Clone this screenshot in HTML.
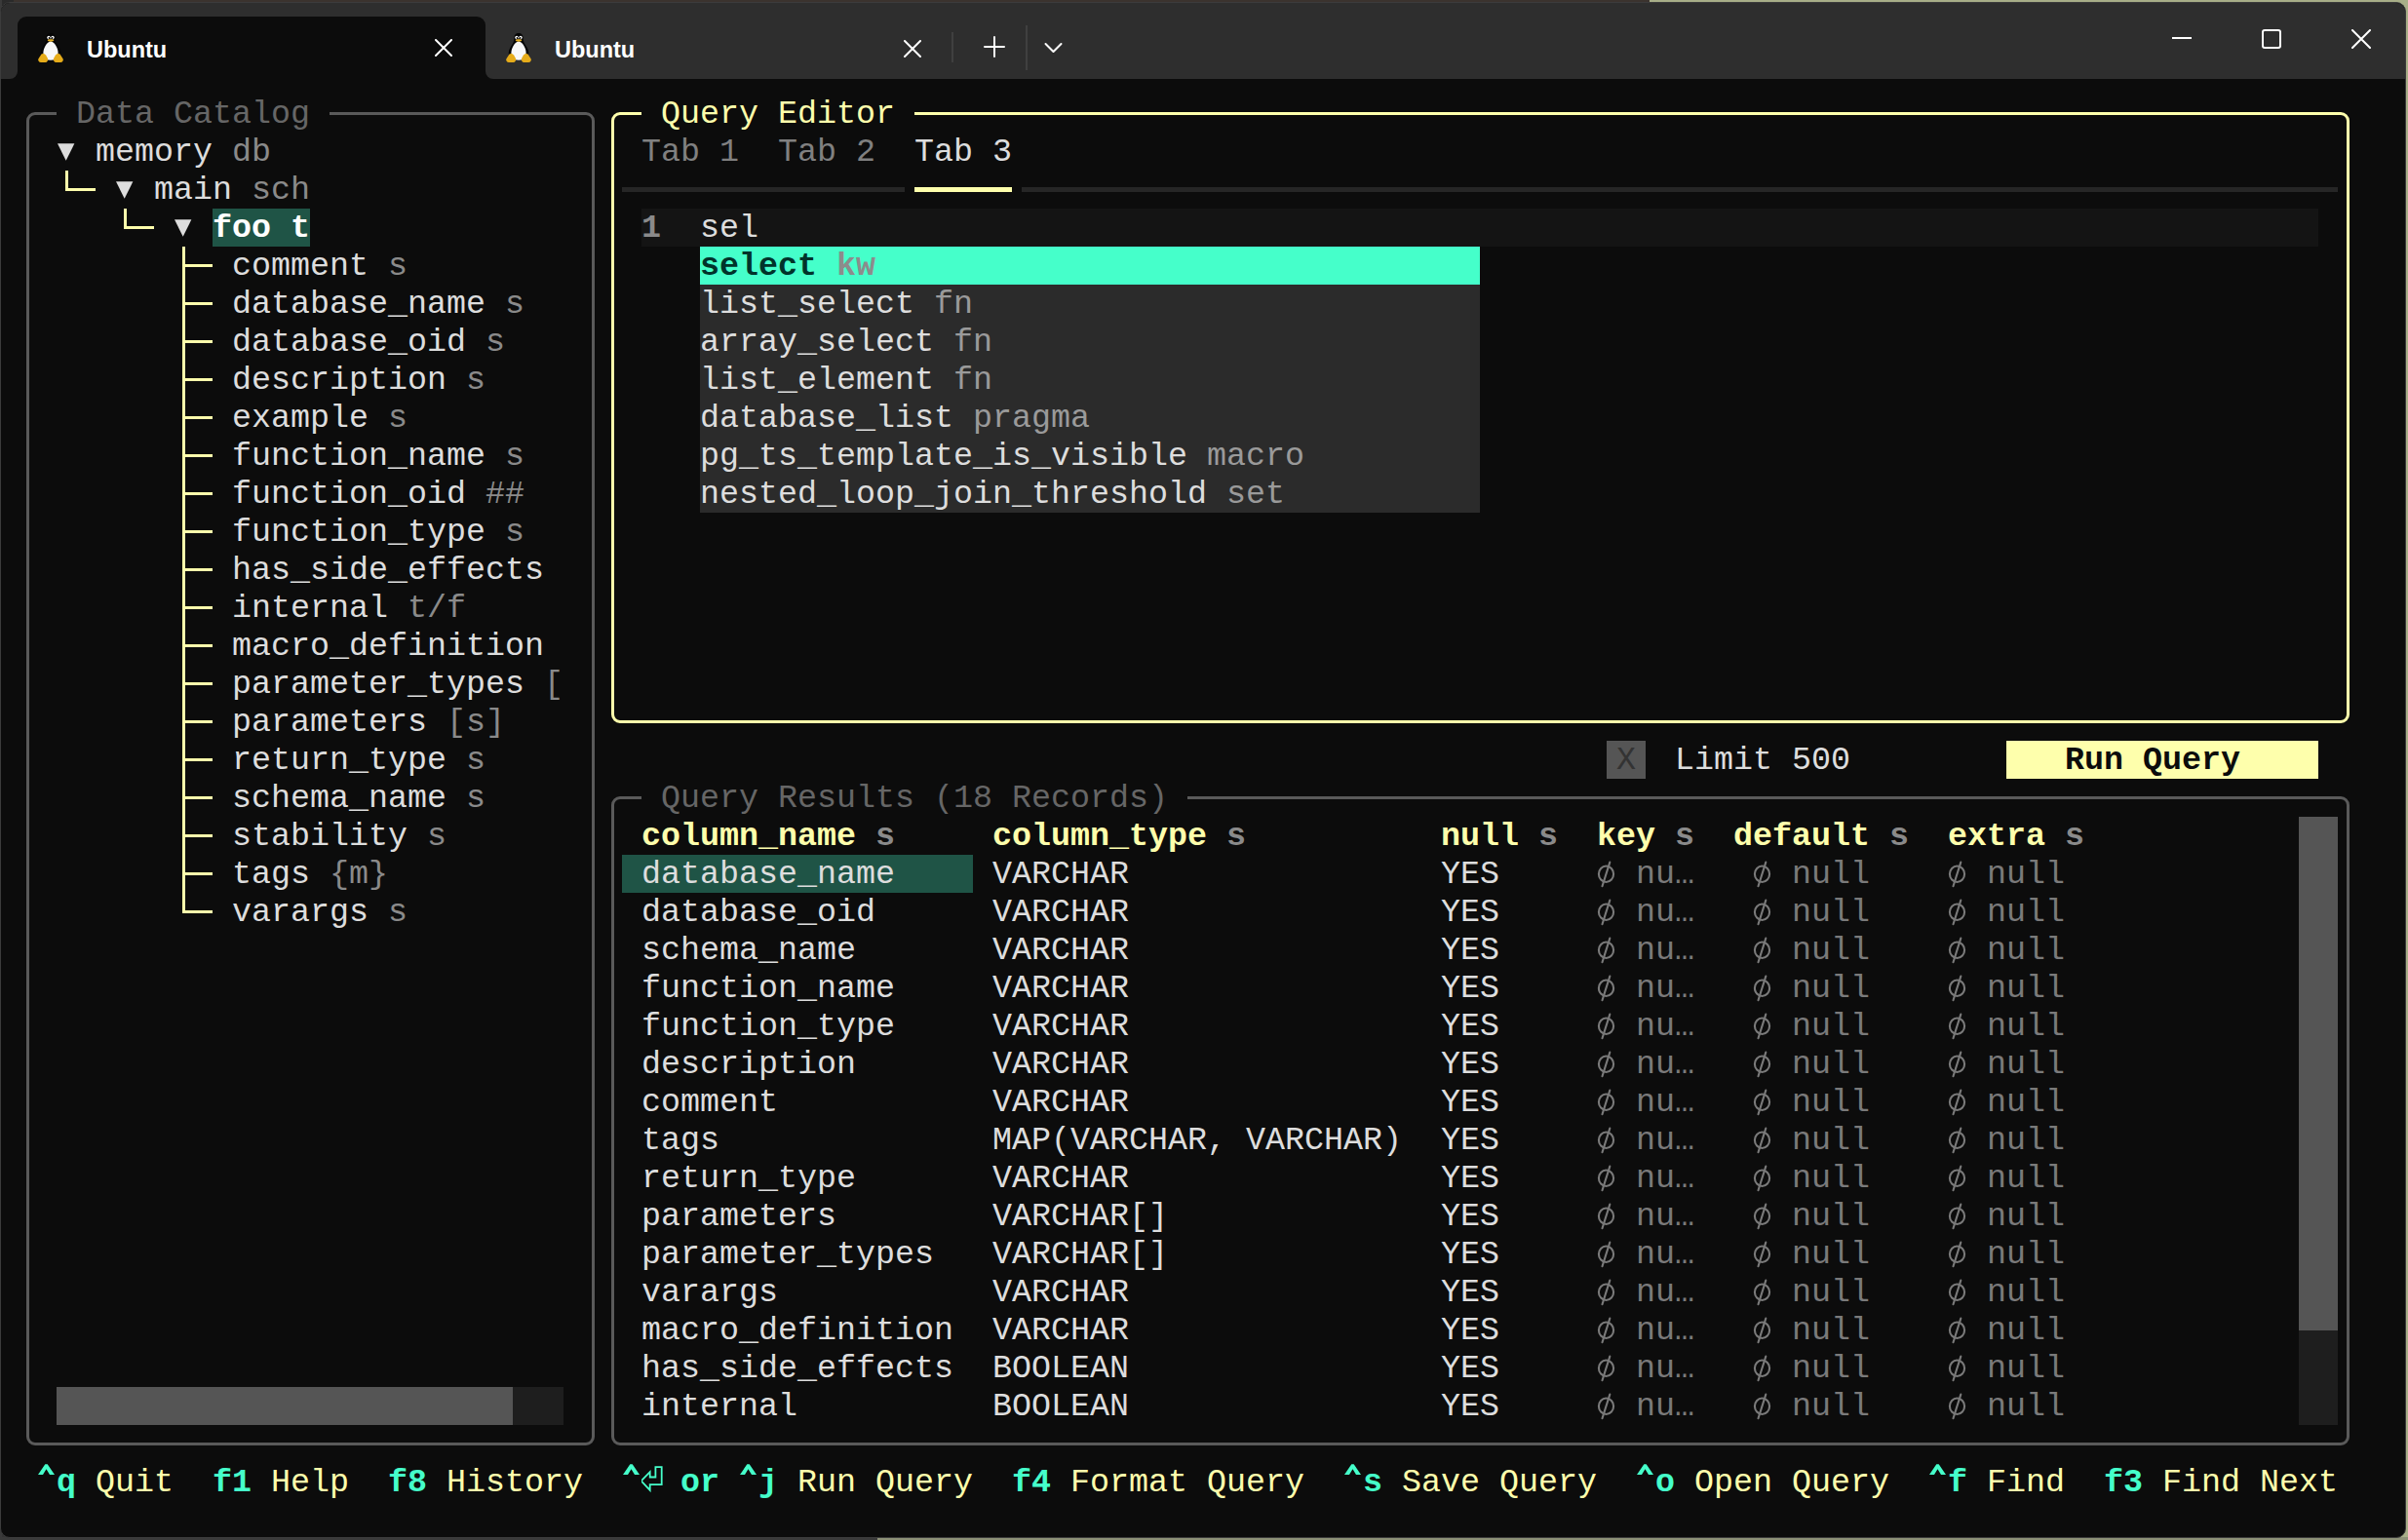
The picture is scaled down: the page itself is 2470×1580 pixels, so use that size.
<!DOCTYPE html>
<html><head><meta charset="utf-8"><title>harlequin</title>
<style>
html,body{margin:0;padding:0;}
body{width:2470px;height:1580px;position:relative;overflow:hidden;background:#a8ae88;}
.r{position:absolute;box-sizing:content-box;}
.t{position:absolute;font-family:"Liberation Mono",monospace;font-size:33.333px;line-height:39px;height:39px;white-space:pre;color:#dddddd;}
.ui{position:absolute;font-family:"Liberation Sans",sans-serif;font-size:23.5px;font-weight:bold;color:#fff;line-height:30px;white-space:pre;}
</style></head><body>
<div class="r" style="left:0;top:0;width:1692px;height:3px;background:#3b332e;"></div>
<div class="r" style="left:0;top:0;width:14px;height:14px;background:#2a2a2a;"></div>
<div class="r" style="left:0;top:1566px;width:14px;height:14px;background:#333333;"></div>
<div class="r" style="left:0;top:0;width:2px;height:1580px;background:#3a3a3a;"></div>
<div class="r" style="left:0;top:1577px;width:900px;height:3px;background:#3a3a3a;"></div>
<div class="r" style="left:900px;top:1577px;width:1570px;height:3px;background:#8e9278;"></div>
<div class="r win" style="left:0px;top:2px;width:2466px;height:1574px;background:#0c0c0c;border:1px solid #3c3c3c;border-radius:10px;overflow:hidden;"></div>
<div class="r" style="left:1px;top:3px;width:2466px;height:78px;background:#2e2e2e;border-radius:9px 9px 0 0;"></div>
<div class="r" style="left:18px;top:17px;width:480px;height:64px;background:#0c0c0c;border-radius:9px 9px 0 0;"></div>
<div class="r" style="left:10px;top:73px;width:8px;height:8px;background:#0c0c0c;"></div>
<div class="r" style="left:2px;top:65px;width:16px;height:16px;background:#2e2e2e;border-radius:0 0 8px 0;"></div>
<div class="r" style="left:498px;top:73px;width:8px;height:8px;background:#0c0c0c;"></div>
<div class="r" style="left:498px;top:65px;width:16px;height:16px;background:#2e2e2e;border-radius:0 0 0 8px;"></div>
<svg class="r" style="left:38px;top:33px;" width="28" height="32" viewBox="0 0 28 32">
<path d="M14 1 C10.5 1 9.3 3.5 9.3 6.5 C9.3 9.5 8.5 11 6.5 14 C4.5 17 3.3 20 3.8 23 C4.2 26 6 28 8 29 L20 29 C22 28 23.8 26 24.2 23 C24.7 20 23.5 17 21.5 14 C19.5 11 18.7 9.5 18.7 6.5 C18.7 3.5 17.5 1 14 1 Z" fill="#050505"/>
<path d="M14 9.5 C11.5 9.5 9.5 12 7.8 15.5 C6.3 18.5 6 22 6.8 25 C7.5 27.5 10 28.8 14 28.8 C18 28.8 20.5 27.5 21.2 25 C22 22 21.7 18.5 20.2 15.5 C18.5 12 16.5 9.5 14 9.5 Z" fill="#f8f8f8"/>
<ellipse cx="12" cy="5.6" rx="1.7" ry="1.8" fill="#fff"/><ellipse cx="16" cy="5.6" rx="1.7" ry="1.8" fill="#fff"/>
<ellipse cx="12.4" cy="6" rx="0.8" ry="0.9" fill="#000"/><ellipse cx="15.6" cy="6" rx="0.8" ry="0.9" fill="#000"/>
<path d="M10.6 8 C11.5 7 16.5 7 17.4 8 C17 10.3 11 10.3 10.6 8 Z" fill="#e8b020"/>
<path d="M1.3 27.5 L4.5 22.5 C6 21.3 8 22 9 23.5 L11 27 C11.5 29 10.5 31 8.5 31 L4 31 C1.8 31 0.8 29 1.3 27.5 Z" fill="#e6ac1a"/>
<path d="M26.7 27.5 L23.5 22.5 C22 21.3 20 22 19 23.5 L17 27 C16.5 29 17.5 31 19.5 31 L24 31 C26.2 31 27.2 29 26.7 27.5 Z" fill="#e6ac1a"/>
</svg>
<svg class="r" style="left:518px;top:33px;" width="28" height="32" viewBox="0 0 28 32">
<path d="M14 1 C10.5 1 9.3 3.5 9.3 6.5 C9.3 9.5 8.5 11 6.5 14 C4.5 17 3.3 20 3.8 23 C4.2 26 6 28 8 29 L20 29 C22 28 23.8 26 24.2 23 C24.7 20 23.5 17 21.5 14 C19.5 11 18.7 9.5 18.7 6.5 C18.7 3.5 17.5 1 14 1 Z" fill="#050505"/>
<path d="M14 9.5 C11.5 9.5 9.5 12 7.8 15.5 C6.3 18.5 6 22 6.8 25 C7.5 27.5 10 28.8 14 28.8 C18 28.8 20.5 27.5 21.2 25 C22 22 21.7 18.5 20.2 15.5 C18.5 12 16.5 9.5 14 9.5 Z" fill="#f8f8f8"/>
<ellipse cx="12" cy="5.6" rx="1.7" ry="1.8" fill="#fff"/><ellipse cx="16" cy="5.6" rx="1.7" ry="1.8" fill="#fff"/>
<ellipse cx="12.4" cy="6" rx="0.8" ry="0.9" fill="#000"/><ellipse cx="15.6" cy="6" rx="0.8" ry="0.9" fill="#000"/>
<path d="M10.6 8 C11.5 7 16.5 7 17.4 8 C17 10.3 11 10.3 10.6 8 Z" fill="#e8b020"/>
<path d="M1.3 27.5 L4.5 22.5 C6 21.3 8 22 9 23.5 L11 27 C11.5 29 10.5 31 8.5 31 L4 31 C1.8 31 0.8 29 1.3 27.5 Z" fill="#e6ac1a"/>
<path d="M26.7 27.5 L23.5 22.5 C22 21.3 20 22 19 23.5 L17 27 C16.5 29 17.5 31 19.5 31 L24 31 C26.2 31 27.2 29 26.7 27.5 Z" fill="#e6ac1a"/>
</svg>
<div class="ui" style="left:89px;top:36px;">Ubuntu</div>
<div class="ui" style="left:569px;top:36px;">Ubuntu</div>
<svg class="r" style="left:446px;top:40px;" width="18" height="18" viewBox="0 0 18 18"><path d="M1 1 L17 17 M17 1 L1 17" stroke="#fff" stroke-width="2" stroke-linecap="round"/></svg>
<svg class="r" style="left:927px;top:41px;" width="18" height="18" viewBox="0 0 18 18"><path d="M1 1 L17 17 M17 1 L1 17" stroke="#fff" stroke-width="2" stroke-linecap="round"/></svg>
<div class="r" style="left:976px;top:33px;width:2px;height:31px;background:#404040;"></div>
<div class="r" style="left:1052px;top:26px;width:2px;height:46px;background:#404040;"></div>
<svg class="r" style="left:1009px;top:37px;" width="22" height="22" viewBox="0 0 22 22"><path d="M11 1 V21 M1 11 H21" stroke="#fff" stroke-width="2" stroke-linecap="round"/></svg>
<svg class="r" style="left:1070px;top:42px;" width="21" height="14" viewBox="0 0 21 14"><path d="M2.5 3 L10.5 11 L18.5 3" stroke="#fff" stroke-width="2" fill="none" stroke-linecap="round" stroke-linejoin="round"/></svg>
<div class="r" style="left:2228px;top:38px;width:20px;height:2px;background:#ffffff;"></div>
<div class="r" style="left:2320px;top:30px;width:16px;height:16px;border:2px solid #fff;border-radius:3px;"></div>
<svg class="r" style="left:2412px;top:30px;" width="20" height="20" viewBox="0 0 20 20"><path d="M1 1 L19 19 M19 1 L1 19" stroke="#fff" stroke-width="2" stroke-linecap="round"/></svg>
<div class="r" style="left:27px;top:115px;width:577px;height:1362px;border:3px solid #5a5a5a;border-radius:9px;"></div>
<div class="r" style="left:58px;top:97px;width:280px;height:39px;background:#0c0c0c;"></div>
<div class="t" style="left:78px;top:98px;color:#666666;">Data Catalog</div>
<svg class="r" style="left:59px;top:147px;" width="18" height="18" viewBox="0 0 18 18"><path d="M0 0.3 H17.4 L8.7 17.7 Z" fill="#dddddd"/></svg>
<div class="t" style="left:98px;top:137px;color:#dddddd;">memory</div>
<div class="t" style="left:238px;top:137px;color:#8a8a8a;">db</div>
<div class="r" style="left:67px;top:175px;width:3px;height:18px;background:#feffac;"></div>
<div class="r" style="left:67px;top:193px;width:31px;height:3px;background:#feffac;"></div>
<svg class="r" style="left:119px;top:186px;" width="18" height="18" viewBox="0 0 18 18"><path d="M0 0.3 H17.4 L8.7 17.7 Z" fill="#dddddd"/></svg>
<div class="t" style="left:158px;top:176px;color:#dddddd;">main</div>
<div class="t" style="left:258px;top:176px;color:#8a8a8a;">sch</div>
<div class="r" style="left:127px;top:214px;width:3px;height:18px;background:#feffac;"></div>
<div class="r" style="left:127px;top:232px;width:31px;height:3px;background:#feffac;"></div>
<svg class="r" style="left:179px;top:225px;" width="18" height="18" viewBox="0 0 18 18"><path d="M0 0.3 H17.4 L8.7 17.7 Z" fill="#dddddd"/></svg>
<div class="r" style="left:218px;top:214px;width:100px;height:39px;background:#1f5446;"></div>
<div class="t" style="left:218px;top:215px;color:#ffffff;font-weight:bold;">foo</div>
<div class="t" style="left:298px;top:215px;color:#ffffff;font-weight:bold;">t</div>
<div class="r" style="left:187px;top:253px;width:3px;height:39px;background:#feffac;"></div>
<div class="r" style="left:187px;top:271px;width:31px;height:3px;background:#feffac;"></div>
<div class="t" style="left:238px;top:254px;color:#dddddd;">comment</div>
<div class="t" style="left:398px;top:254px;color:#8a8a8a;">s</div>
<div class="r" style="left:187px;top:292px;width:3px;height:39px;background:#feffac;"></div>
<div class="r" style="left:187px;top:310px;width:31px;height:3px;background:#feffac;"></div>
<div class="t" style="left:238px;top:293px;color:#dddddd;">database_name</div>
<div class="t" style="left:518px;top:293px;color:#8a8a8a;">s</div>
<div class="r" style="left:187px;top:331px;width:3px;height:39px;background:#feffac;"></div>
<div class="r" style="left:187px;top:349px;width:31px;height:3px;background:#feffac;"></div>
<div class="t" style="left:238px;top:332px;color:#dddddd;">database_oid</div>
<div class="t" style="left:498px;top:332px;color:#8a8a8a;">s</div>
<div class="r" style="left:187px;top:370px;width:3px;height:39px;background:#feffac;"></div>
<div class="r" style="left:187px;top:388px;width:31px;height:3px;background:#feffac;"></div>
<div class="t" style="left:238px;top:371px;color:#dddddd;">description</div>
<div class="t" style="left:478px;top:371px;color:#8a8a8a;">s</div>
<div class="r" style="left:187px;top:409px;width:3px;height:39px;background:#feffac;"></div>
<div class="r" style="left:187px;top:427px;width:31px;height:3px;background:#feffac;"></div>
<div class="t" style="left:238px;top:410px;color:#dddddd;">example</div>
<div class="t" style="left:398px;top:410px;color:#8a8a8a;">s</div>
<div class="r" style="left:187px;top:448px;width:3px;height:39px;background:#feffac;"></div>
<div class="r" style="left:187px;top:466px;width:31px;height:3px;background:#feffac;"></div>
<div class="t" style="left:238px;top:449px;color:#dddddd;">function_name</div>
<div class="t" style="left:518px;top:449px;color:#8a8a8a;">s</div>
<div class="r" style="left:187px;top:487px;width:3px;height:39px;background:#feffac;"></div>
<div class="r" style="left:187px;top:505px;width:31px;height:3px;background:#feffac;"></div>
<div class="t" style="left:238px;top:488px;color:#dddddd;">function_oid</div>
<div class="t" style="left:498px;top:488px;color:#8a8a8a;">##</div>
<div class="r" style="left:187px;top:526px;width:3px;height:39px;background:#feffac;"></div>
<div class="r" style="left:187px;top:544px;width:31px;height:3px;background:#feffac;"></div>
<div class="t" style="left:238px;top:527px;color:#dddddd;">function_type</div>
<div class="t" style="left:518px;top:527px;color:#8a8a8a;">s</div>
<div class="r" style="left:187px;top:565px;width:3px;height:39px;background:#feffac;"></div>
<div class="r" style="left:187px;top:583px;width:31px;height:3px;background:#feffac;"></div>
<div class="t" style="left:238px;top:566px;color:#dddddd;">has_side_effects</div>
<div class="r" style="left:187px;top:604px;width:3px;height:39px;background:#feffac;"></div>
<div class="r" style="left:187px;top:622px;width:31px;height:3px;background:#feffac;"></div>
<div class="t" style="left:238px;top:605px;color:#dddddd;">internal</div>
<div class="t" style="left:418px;top:605px;color:#8a8a8a;">t/f</div>
<div class="r" style="left:187px;top:643px;width:3px;height:39px;background:#feffac;"></div>
<div class="r" style="left:187px;top:661px;width:31px;height:3px;background:#feffac;"></div>
<div class="t" style="left:238px;top:644px;color:#dddddd;">macro_definition</div>
<div class="r" style="left:187px;top:682px;width:3px;height:39px;background:#feffac;"></div>
<div class="r" style="left:187px;top:700px;width:31px;height:3px;background:#feffac;"></div>
<div class="t" style="left:238px;top:683px;color:#dddddd;">parameter_types</div>
<div class="t" style="left:558px;top:683px;color:#8a8a8a;">[</div>
<div class="r" style="left:187px;top:721px;width:3px;height:39px;background:#feffac;"></div>
<div class="r" style="left:187px;top:739px;width:31px;height:3px;background:#feffac;"></div>
<div class="t" style="left:238px;top:722px;color:#dddddd;">parameters</div>
<div class="t" style="left:458px;top:722px;color:#8a8a8a;">[s]</div>
<div class="r" style="left:187px;top:760px;width:3px;height:39px;background:#feffac;"></div>
<div class="r" style="left:187px;top:778px;width:31px;height:3px;background:#feffac;"></div>
<div class="t" style="left:238px;top:761px;color:#dddddd;">return_type</div>
<div class="t" style="left:478px;top:761px;color:#8a8a8a;">s</div>
<div class="r" style="left:187px;top:799px;width:3px;height:39px;background:#feffac;"></div>
<div class="r" style="left:187px;top:817px;width:31px;height:3px;background:#feffac;"></div>
<div class="t" style="left:238px;top:800px;color:#dddddd;">schema_name</div>
<div class="t" style="left:478px;top:800px;color:#8a8a8a;">s</div>
<div class="r" style="left:187px;top:838px;width:3px;height:39px;background:#feffac;"></div>
<div class="r" style="left:187px;top:856px;width:31px;height:3px;background:#feffac;"></div>
<div class="t" style="left:238px;top:839px;color:#dddddd;">stability</div>
<div class="t" style="left:438px;top:839px;color:#8a8a8a;">s</div>
<div class="r" style="left:187px;top:877px;width:3px;height:39px;background:#feffac;"></div>
<div class="r" style="left:187px;top:895px;width:31px;height:3px;background:#feffac;"></div>
<div class="t" style="left:238px;top:878px;color:#dddddd;">tags</div>
<div class="t" style="left:338px;top:878px;color:#8a8a8a;">{m}</div>
<div class="r" style="left:187px;top:916px;width:3px;height:18px;background:#feffac;"></div>
<div class="r" style="left:187px;top:934px;width:31px;height:3px;background:#feffac;"></div>
<div class="t" style="left:238px;top:917px;color:#dddddd;">varargs</div>
<div class="t" style="left:398px;top:917px;color:#8a8a8a;">s</div>
<div class="r" style="left:58px;top:1423px;width:520px;height:39px;background:#1e1e1e;"></div>
<div class="r" style="left:58px;top:1423px;width:468px;height:39px;background:#555555;"></div>
<div class="r" style="left:627px;top:115px;width:1777px;height:621px;border:3px solid #feffac;border-radius:9px;"></div>
<div class="r" style="left:658px;top:97px;width:280px;height:39px;background:#0c0c0c;"></div>
<div class="t" style="left:678px;top:98px;color:#feffac;">Query Editor</div>
<div class="t" style="left:658px;top:137px;color:#808080;">Tab 1</div>
<div class="t" style="left:798px;top:137px;color:#808080;">Tab 2</div>
<div class="t" style="left:938px;top:137px;color:#dddddd;">Tab 3</div>
<div class="r" style="left:638px;top:192px;width:290px;height:5px;background:#262626;"></div>
<div class="r" style="left:938px;top:192px;width:100px;height:5px;background:#feffac;"></div>
<div class="r" style="left:1048px;top:192px;width:1350px;height:5px;background:#262626;"></div>
<div class="r" style="left:658px;top:214px;width:1720px;height:39px;background:#141414;"></div>
<div class="t" style="left:658px;top:215px;color:#8a8a8a;font-weight:bold;">1</div>
<div class="t" style="left:718px;top:215px;color:#dddddd;">sel</div>
<div class="r" style="left:718px;top:253px;width:800px;height:273px;background:#2b2b2b;"></div>
<div class="r" style="left:718px;top:253px;width:800px;height:39px;background:#45ffca;"></div>
<div class="t" style="left:718px;top:254px;color:#00332a;font-weight:bold;">select</div>
<div class="t" style="left:858px;top:254px;color:#8c8c8c;font-weight:bold;">kw</div>
<div class="t" style="left:718px;top:293px;color:#dddddd;">list_select</div>
<div class="t" style="left:958px;top:293px;color:#9a9a9a;">fn</div>
<div class="t" style="left:718px;top:332px;color:#dddddd;">array_select</div>
<div class="t" style="left:978px;top:332px;color:#9a9a9a;">fn</div>
<div class="t" style="left:718px;top:371px;color:#dddddd;">list_element</div>
<div class="t" style="left:978px;top:371px;color:#9a9a9a;">fn</div>
<div class="t" style="left:718px;top:410px;color:#dddddd;">database_list</div>
<div class="t" style="left:998px;top:410px;color:#9a9a9a;">pragma</div>
<div class="t" style="left:718px;top:449px;color:#dddddd;">pg_ts_template_is_visible</div>
<div class="t" style="left:1238px;top:449px;color:#9a9a9a;">macro</div>
<div class="t" style="left:718px;top:488px;color:#dddddd;">nested_loop_join_threshold</div>
<div class="t" style="left:1258px;top:488px;color:#9a9a9a;">set</div>
<div class="r" style="left:1648px;top:760px;width:40px;height:39px;background:#555555;"></div>
<div class="t" style="left:1658px;top:761px;color:#333333;">X</div>
<div class="t" style="left:1718px;top:761px;color:#dddddd;">Limit 500</div>
<div class="r" style="left:2058px;top:760px;width:320px;height:39px;background:#feffac;"></div>
<div class="t" style="left:2118px;top:761px;color:#0c0c0c;font-weight:bold;">Run Query</div>
<div class="r" style="left:627px;top:817px;width:1777px;height:660px;border:3px solid #5a5a5a;border-radius:9px;"></div>
<div class="r" style="left:658px;top:799px;width:560px;height:39px;background:#0c0c0c;"></div>
<div class="t" style="left:678px;top:800px;color:#666666;">Query Results (18 Records)</div>
<div class="t" style="left:658px;top:839px;color:#feffac;font-weight:bold;">column_name</div>
<div class="t" style="left:898px;top:839px;color:#8a8a8a;font-weight:bold;">s</div>
<div class="t" style="left:1018px;top:839px;color:#feffac;font-weight:bold;">column_type</div>
<div class="t" style="left:1258px;top:839px;color:#8a8a8a;font-weight:bold;">s</div>
<div class="t" style="left:1478px;top:839px;color:#feffac;font-weight:bold;">null</div>
<div class="t" style="left:1578px;top:839px;color:#8a8a8a;font-weight:bold;">s</div>
<div class="t" style="left:1638px;top:839px;color:#feffac;font-weight:bold;">key</div>
<div class="t" style="left:1718px;top:839px;color:#8a8a8a;font-weight:bold;">s</div>
<div class="t" style="left:1778px;top:839px;color:#feffac;font-weight:bold;">default</div>
<div class="t" style="left:1938px;top:839px;color:#8a8a8a;font-weight:bold;">s</div>
<div class="t" style="left:1998px;top:839px;color:#feffac;font-weight:bold;">extra</div>
<div class="t" style="left:2118px;top:839px;color:#8a8a8a;font-weight:bold;">s</div>
<div class="r" style="left:638px;top:877px;width:360px;height:39px;background:#1f5446;"></div>
<div class="t" style="left:658px;top:878px;color:#dddddd;">database_name</div>
<div class="t" style="left:1018px;top:878px;color:#dddddd;">VARCHAR</div>
<div class="t" style="left:1478px;top:878px;color:#dddddd;">YES</div>
<svg class="r" style="left:1638px;top:877px;" width="20" height="39" viewBox="0 0 20 39"><ellipse cx="9.5" cy="19.75" rx="7.6" ry="8.2" stroke="#7a7a7a" stroke-width="2.1" fill="none"/><path d="M13.3 7.6 L5.5 32.2" stroke="#7a7a7a" stroke-width="2.1" stroke-linecap="round"/></svg>
<div class="t" style="left:1678px;top:878px;color:#7a7a7a;">nu…</div>
<svg class="r" style="left:1798px;top:877px;" width="20" height="39" viewBox="0 0 20 39"><ellipse cx="9.5" cy="19.75" rx="7.6" ry="8.2" stroke="#7a7a7a" stroke-width="2.1" fill="none"/><path d="M13.3 7.6 L5.5 32.2" stroke="#7a7a7a" stroke-width="2.1" stroke-linecap="round"/></svg>
<div class="t" style="left:1838px;top:878px;color:#7a7a7a;">null</div>
<svg class="r" style="left:1998px;top:877px;" width="20" height="39" viewBox="0 0 20 39"><ellipse cx="9.5" cy="19.75" rx="7.6" ry="8.2" stroke="#7a7a7a" stroke-width="2.1" fill="none"/><path d="M13.3 7.6 L5.5 32.2" stroke="#7a7a7a" stroke-width="2.1" stroke-linecap="round"/></svg>
<div class="t" style="left:2038px;top:878px;color:#7a7a7a;">null</div>
<div class="t" style="left:658px;top:917px;color:#dddddd;">database_oid</div>
<div class="t" style="left:1018px;top:917px;color:#dddddd;">VARCHAR</div>
<div class="t" style="left:1478px;top:917px;color:#dddddd;">YES</div>
<svg class="r" style="left:1638px;top:916px;" width="20" height="39" viewBox="0 0 20 39"><ellipse cx="9.5" cy="19.75" rx="7.6" ry="8.2" stroke="#7a7a7a" stroke-width="2.1" fill="none"/><path d="M13.3 7.6 L5.5 32.2" stroke="#7a7a7a" stroke-width="2.1" stroke-linecap="round"/></svg>
<div class="t" style="left:1678px;top:917px;color:#7a7a7a;">nu…</div>
<svg class="r" style="left:1798px;top:916px;" width="20" height="39" viewBox="0 0 20 39"><ellipse cx="9.5" cy="19.75" rx="7.6" ry="8.2" stroke="#7a7a7a" stroke-width="2.1" fill="none"/><path d="M13.3 7.6 L5.5 32.2" stroke="#7a7a7a" stroke-width="2.1" stroke-linecap="round"/></svg>
<div class="t" style="left:1838px;top:917px;color:#7a7a7a;">null</div>
<svg class="r" style="left:1998px;top:916px;" width="20" height="39" viewBox="0 0 20 39"><ellipse cx="9.5" cy="19.75" rx="7.6" ry="8.2" stroke="#7a7a7a" stroke-width="2.1" fill="none"/><path d="M13.3 7.6 L5.5 32.2" stroke="#7a7a7a" stroke-width="2.1" stroke-linecap="round"/></svg>
<div class="t" style="left:2038px;top:917px;color:#7a7a7a;">null</div>
<div class="t" style="left:658px;top:956px;color:#dddddd;">schema_name</div>
<div class="t" style="left:1018px;top:956px;color:#dddddd;">VARCHAR</div>
<div class="t" style="left:1478px;top:956px;color:#dddddd;">YES</div>
<svg class="r" style="left:1638px;top:955px;" width="20" height="39" viewBox="0 0 20 39"><ellipse cx="9.5" cy="19.75" rx="7.6" ry="8.2" stroke="#7a7a7a" stroke-width="2.1" fill="none"/><path d="M13.3 7.6 L5.5 32.2" stroke="#7a7a7a" stroke-width="2.1" stroke-linecap="round"/></svg>
<div class="t" style="left:1678px;top:956px;color:#7a7a7a;">nu…</div>
<svg class="r" style="left:1798px;top:955px;" width="20" height="39" viewBox="0 0 20 39"><ellipse cx="9.5" cy="19.75" rx="7.6" ry="8.2" stroke="#7a7a7a" stroke-width="2.1" fill="none"/><path d="M13.3 7.6 L5.5 32.2" stroke="#7a7a7a" stroke-width="2.1" stroke-linecap="round"/></svg>
<div class="t" style="left:1838px;top:956px;color:#7a7a7a;">null</div>
<svg class="r" style="left:1998px;top:955px;" width="20" height="39" viewBox="0 0 20 39"><ellipse cx="9.5" cy="19.75" rx="7.6" ry="8.2" stroke="#7a7a7a" stroke-width="2.1" fill="none"/><path d="M13.3 7.6 L5.5 32.2" stroke="#7a7a7a" stroke-width="2.1" stroke-linecap="round"/></svg>
<div class="t" style="left:2038px;top:956px;color:#7a7a7a;">null</div>
<div class="t" style="left:658px;top:995px;color:#dddddd;">function_name</div>
<div class="t" style="left:1018px;top:995px;color:#dddddd;">VARCHAR</div>
<div class="t" style="left:1478px;top:995px;color:#dddddd;">YES</div>
<svg class="r" style="left:1638px;top:994px;" width="20" height="39" viewBox="0 0 20 39"><ellipse cx="9.5" cy="19.75" rx="7.6" ry="8.2" stroke="#7a7a7a" stroke-width="2.1" fill="none"/><path d="M13.3 7.6 L5.5 32.2" stroke="#7a7a7a" stroke-width="2.1" stroke-linecap="round"/></svg>
<div class="t" style="left:1678px;top:995px;color:#7a7a7a;">nu…</div>
<svg class="r" style="left:1798px;top:994px;" width="20" height="39" viewBox="0 0 20 39"><ellipse cx="9.5" cy="19.75" rx="7.6" ry="8.2" stroke="#7a7a7a" stroke-width="2.1" fill="none"/><path d="M13.3 7.6 L5.5 32.2" stroke="#7a7a7a" stroke-width="2.1" stroke-linecap="round"/></svg>
<div class="t" style="left:1838px;top:995px;color:#7a7a7a;">null</div>
<svg class="r" style="left:1998px;top:994px;" width="20" height="39" viewBox="0 0 20 39"><ellipse cx="9.5" cy="19.75" rx="7.6" ry="8.2" stroke="#7a7a7a" stroke-width="2.1" fill="none"/><path d="M13.3 7.6 L5.5 32.2" stroke="#7a7a7a" stroke-width="2.1" stroke-linecap="round"/></svg>
<div class="t" style="left:2038px;top:995px;color:#7a7a7a;">null</div>
<div class="t" style="left:658px;top:1034px;color:#dddddd;">function_type</div>
<div class="t" style="left:1018px;top:1034px;color:#dddddd;">VARCHAR</div>
<div class="t" style="left:1478px;top:1034px;color:#dddddd;">YES</div>
<svg class="r" style="left:1638px;top:1033px;" width="20" height="39" viewBox="0 0 20 39"><ellipse cx="9.5" cy="19.75" rx="7.6" ry="8.2" stroke="#7a7a7a" stroke-width="2.1" fill="none"/><path d="M13.3 7.6 L5.5 32.2" stroke="#7a7a7a" stroke-width="2.1" stroke-linecap="round"/></svg>
<div class="t" style="left:1678px;top:1034px;color:#7a7a7a;">nu…</div>
<svg class="r" style="left:1798px;top:1033px;" width="20" height="39" viewBox="0 0 20 39"><ellipse cx="9.5" cy="19.75" rx="7.6" ry="8.2" stroke="#7a7a7a" stroke-width="2.1" fill="none"/><path d="M13.3 7.6 L5.5 32.2" stroke="#7a7a7a" stroke-width="2.1" stroke-linecap="round"/></svg>
<div class="t" style="left:1838px;top:1034px;color:#7a7a7a;">null</div>
<svg class="r" style="left:1998px;top:1033px;" width="20" height="39" viewBox="0 0 20 39"><ellipse cx="9.5" cy="19.75" rx="7.6" ry="8.2" stroke="#7a7a7a" stroke-width="2.1" fill="none"/><path d="M13.3 7.6 L5.5 32.2" stroke="#7a7a7a" stroke-width="2.1" stroke-linecap="round"/></svg>
<div class="t" style="left:2038px;top:1034px;color:#7a7a7a;">null</div>
<div class="t" style="left:658px;top:1073px;color:#dddddd;">description</div>
<div class="t" style="left:1018px;top:1073px;color:#dddddd;">VARCHAR</div>
<div class="t" style="left:1478px;top:1073px;color:#dddddd;">YES</div>
<svg class="r" style="left:1638px;top:1072px;" width="20" height="39" viewBox="0 0 20 39"><ellipse cx="9.5" cy="19.75" rx="7.6" ry="8.2" stroke="#7a7a7a" stroke-width="2.1" fill="none"/><path d="M13.3 7.6 L5.5 32.2" stroke="#7a7a7a" stroke-width="2.1" stroke-linecap="round"/></svg>
<div class="t" style="left:1678px;top:1073px;color:#7a7a7a;">nu…</div>
<svg class="r" style="left:1798px;top:1072px;" width="20" height="39" viewBox="0 0 20 39"><ellipse cx="9.5" cy="19.75" rx="7.6" ry="8.2" stroke="#7a7a7a" stroke-width="2.1" fill="none"/><path d="M13.3 7.6 L5.5 32.2" stroke="#7a7a7a" stroke-width="2.1" stroke-linecap="round"/></svg>
<div class="t" style="left:1838px;top:1073px;color:#7a7a7a;">null</div>
<svg class="r" style="left:1998px;top:1072px;" width="20" height="39" viewBox="0 0 20 39"><ellipse cx="9.5" cy="19.75" rx="7.6" ry="8.2" stroke="#7a7a7a" stroke-width="2.1" fill="none"/><path d="M13.3 7.6 L5.5 32.2" stroke="#7a7a7a" stroke-width="2.1" stroke-linecap="round"/></svg>
<div class="t" style="left:2038px;top:1073px;color:#7a7a7a;">null</div>
<div class="t" style="left:658px;top:1112px;color:#dddddd;">comment</div>
<div class="t" style="left:1018px;top:1112px;color:#dddddd;">VARCHAR</div>
<div class="t" style="left:1478px;top:1112px;color:#dddddd;">YES</div>
<svg class="r" style="left:1638px;top:1111px;" width="20" height="39" viewBox="0 0 20 39"><ellipse cx="9.5" cy="19.75" rx="7.6" ry="8.2" stroke="#7a7a7a" stroke-width="2.1" fill="none"/><path d="M13.3 7.6 L5.5 32.2" stroke="#7a7a7a" stroke-width="2.1" stroke-linecap="round"/></svg>
<div class="t" style="left:1678px;top:1112px;color:#7a7a7a;">nu…</div>
<svg class="r" style="left:1798px;top:1111px;" width="20" height="39" viewBox="0 0 20 39"><ellipse cx="9.5" cy="19.75" rx="7.6" ry="8.2" stroke="#7a7a7a" stroke-width="2.1" fill="none"/><path d="M13.3 7.6 L5.5 32.2" stroke="#7a7a7a" stroke-width="2.1" stroke-linecap="round"/></svg>
<div class="t" style="left:1838px;top:1112px;color:#7a7a7a;">null</div>
<svg class="r" style="left:1998px;top:1111px;" width="20" height="39" viewBox="0 0 20 39"><ellipse cx="9.5" cy="19.75" rx="7.6" ry="8.2" stroke="#7a7a7a" stroke-width="2.1" fill="none"/><path d="M13.3 7.6 L5.5 32.2" stroke="#7a7a7a" stroke-width="2.1" stroke-linecap="round"/></svg>
<div class="t" style="left:2038px;top:1112px;color:#7a7a7a;">null</div>
<div class="t" style="left:658px;top:1151px;color:#dddddd;">tags</div>
<div class="t" style="left:1018px;top:1151px;color:#dddddd;">MAP(VARCHAR, VARCHAR)</div>
<div class="t" style="left:1478px;top:1151px;color:#dddddd;">YES</div>
<svg class="r" style="left:1638px;top:1150px;" width="20" height="39" viewBox="0 0 20 39"><ellipse cx="9.5" cy="19.75" rx="7.6" ry="8.2" stroke="#7a7a7a" stroke-width="2.1" fill="none"/><path d="M13.3 7.6 L5.5 32.2" stroke="#7a7a7a" stroke-width="2.1" stroke-linecap="round"/></svg>
<div class="t" style="left:1678px;top:1151px;color:#7a7a7a;">nu…</div>
<svg class="r" style="left:1798px;top:1150px;" width="20" height="39" viewBox="0 0 20 39"><ellipse cx="9.5" cy="19.75" rx="7.6" ry="8.2" stroke="#7a7a7a" stroke-width="2.1" fill="none"/><path d="M13.3 7.6 L5.5 32.2" stroke="#7a7a7a" stroke-width="2.1" stroke-linecap="round"/></svg>
<div class="t" style="left:1838px;top:1151px;color:#7a7a7a;">null</div>
<svg class="r" style="left:1998px;top:1150px;" width="20" height="39" viewBox="0 0 20 39"><ellipse cx="9.5" cy="19.75" rx="7.6" ry="8.2" stroke="#7a7a7a" stroke-width="2.1" fill="none"/><path d="M13.3 7.6 L5.5 32.2" stroke="#7a7a7a" stroke-width="2.1" stroke-linecap="round"/></svg>
<div class="t" style="left:2038px;top:1151px;color:#7a7a7a;">null</div>
<div class="t" style="left:658px;top:1190px;color:#dddddd;">return_type</div>
<div class="t" style="left:1018px;top:1190px;color:#dddddd;">VARCHAR</div>
<div class="t" style="left:1478px;top:1190px;color:#dddddd;">YES</div>
<svg class="r" style="left:1638px;top:1189px;" width="20" height="39" viewBox="0 0 20 39"><ellipse cx="9.5" cy="19.75" rx="7.6" ry="8.2" stroke="#7a7a7a" stroke-width="2.1" fill="none"/><path d="M13.3 7.6 L5.5 32.2" stroke="#7a7a7a" stroke-width="2.1" stroke-linecap="round"/></svg>
<div class="t" style="left:1678px;top:1190px;color:#7a7a7a;">nu…</div>
<svg class="r" style="left:1798px;top:1189px;" width="20" height="39" viewBox="0 0 20 39"><ellipse cx="9.5" cy="19.75" rx="7.6" ry="8.2" stroke="#7a7a7a" stroke-width="2.1" fill="none"/><path d="M13.3 7.6 L5.5 32.2" stroke="#7a7a7a" stroke-width="2.1" stroke-linecap="round"/></svg>
<div class="t" style="left:1838px;top:1190px;color:#7a7a7a;">null</div>
<svg class="r" style="left:1998px;top:1189px;" width="20" height="39" viewBox="0 0 20 39"><ellipse cx="9.5" cy="19.75" rx="7.6" ry="8.2" stroke="#7a7a7a" stroke-width="2.1" fill="none"/><path d="M13.3 7.6 L5.5 32.2" stroke="#7a7a7a" stroke-width="2.1" stroke-linecap="round"/></svg>
<div class="t" style="left:2038px;top:1190px;color:#7a7a7a;">null</div>
<div class="t" style="left:658px;top:1229px;color:#dddddd;">parameters</div>
<div class="t" style="left:1018px;top:1229px;color:#dddddd;">VARCHAR[]</div>
<div class="t" style="left:1478px;top:1229px;color:#dddddd;">YES</div>
<svg class="r" style="left:1638px;top:1228px;" width="20" height="39" viewBox="0 0 20 39"><ellipse cx="9.5" cy="19.75" rx="7.6" ry="8.2" stroke="#7a7a7a" stroke-width="2.1" fill="none"/><path d="M13.3 7.6 L5.5 32.2" stroke="#7a7a7a" stroke-width="2.1" stroke-linecap="round"/></svg>
<div class="t" style="left:1678px;top:1229px;color:#7a7a7a;">nu…</div>
<svg class="r" style="left:1798px;top:1228px;" width="20" height="39" viewBox="0 0 20 39"><ellipse cx="9.5" cy="19.75" rx="7.6" ry="8.2" stroke="#7a7a7a" stroke-width="2.1" fill="none"/><path d="M13.3 7.6 L5.5 32.2" stroke="#7a7a7a" stroke-width="2.1" stroke-linecap="round"/></svg>
<div class="t" style="left:1838px;top:1229px;color:#7a7a7a;">null</div>
<svg class="r" style="left:1998px;top:1228px;" width="20" height="39" viewBox="0 0 20 39"><ellipse cx="9.5" cy="19.75" rx="7.6" ry="8.2" stroke="#7a7a7a" stroke-width="2.1" fill="none"/><path d="M13.3 7.6 L5.5 32.2" stroke="#7a7a7a" stroke-width="2.1" stroke-linecap="round"/></svg>
<div class="t" style="left:2038px;top:1229px;color:#7a7a7a;">null</div>
<div class="t" style="left:658px;top:1268px;color:#dddddd;">parameter_types</div>
<div class="t" style="left:1018px;top:1268px;color:#dddddd;">VARCHAR[]</div>
<div class="t" style="left:1478px;top:1268px;color:#dddddd;">YES</div>
<svg class="r" style="left:1638px;top:1267px;" width="20" height="39" viewBox="0 0 20 39"><ellipse cx="9.5" cy="19.75" rx="7.6" ry="8.2" stroke="#7a7a7a" stroke-width="2.1" fill="none"/><path d="M13.3 7.6 L5.5 32.2" stroke="#7a7a7a" stroke-width="2.1" stroke-linecap="round"/></svg>
<div class="t" style="left:1678px;top:1268px;color:#7a7a7a;">nu…</div>
<svg class="r" style="left:1798px;top:1267px;" width="20" height="39" viewBox="0 0 20 39"><ellipse cx="9.5" cy="19.75" rx="7.6" ry="8.2" stroke="#7a7a7a" stroke-width="2.1" fill="none"/><path d="M13.3 7.6 L5.5 32.2" stroke="#7a7a7a" stroke-width="2.1" stroke-linecap="round"/></svg>
<div class="t" style="left:1838px;top:1268px;color:#7a7a7a;">null</div>
<svg class="r" style="left:1998px;top:1267px;" width="20" height="39" viewBox="0 0 20 39"><ellipse cx="9.5" cy="19.75" rx="7.6" ry="8.2" stroke="#7a7a7a" stroke-width="2.1" fill="none"/><path d="M13.3 7.6 L5.5 32.2" stroke="#7a7a7a" stroke-width="2.1" stroke-linecap="round"/></svg>
<div class="t" style="left:2038px;top:1268px;color:#7a7a7a;">null</div>
<div class="t" style="left:658px;top:1307px;color:#dddddd;">varargs</div>
<div class="t" style="left:1018px;top:1307px;color:#dddddd;">VARCHAR</div>
<div class="t" style="left:1478px;top:1307px;color:#dddddd;">YES</div>
<svg class="r" style="left:1638px;top:1306px;" width="20" height="39" viewBox="0 0 20 39"><ellipse cx="9.5" cy="19.75" rx="7.6" ry="8.2" stroke="#7a7a7a" stroke-width="2.1" fill="none"/><path d="M13.3 7.6 L5.5 32.2" stroke="#7a7a7a" stroke-width="2.1" stroke-linecap="round"/></svg>
<div class="t" style="left:1678px;top:1307px;color:#7a7a7a;">nu…</div>
<svg class="r" style="left:1798px;top:1306px;" width="20" height="39" viewBox="0 0 20 39"><ellipse cx="9.5" cy="19.75" rx="7.6" ry="8.2" stroke="#7a7a7a" stroke-width="2.1" fill="none"/><path d="M13.3 7.6 L5.5 32.2" stroke="#7a7a7a" stroke-width="2.1" stroke-linecap="round"/></svg>
<div class="t" style="left:1838px;top:1307px;color:#7a7a7a;">null</div>
<svg class="r" style="left:1998px;top:1306px;" width="20" height="39" viewBox="0 0 20 39"><ellipse cx="9.5" cy="19.75" rx="7.6" ry="8.2" stroke="#7a7a7a" stroke-width="2.1" fill="none"/><path d="M13.3 7.6 L5.5 32.2" stroke="#7a7a7a" stroke-width="2.1" stroke-linecap="round"/></svg>
<div class="t" style="left:2038px;top:1307px;color:#7a7a7a;">null</div>
<div class="t" style="left:658px;top:1346px;color:#dddddd;">macro_definition</div>
<div class="t" style="left:1018px;top:1346px;color:#dddddd;">VARCHAR</div>
<div class="t" style="left:1478px;top:1346px;color:#dddddd;">YES</div>
<svg class="r" style="left:1638px;top:1345px;" width="20" height="39" viewBox="0 0 20 39"><ellipse cx="9.5" cy="19.75" rx="7.6" ry="8.2" stroke="#7a7a7a" stroke-width="2.1" fill="none"/><path d="M13.3 7.6 L5.5 32.2" stroke="#7a7a7a" stroke-width="2.1" stroke-linecap="round"/></svg>
<div class="t" style="left:1678px;top:1346px;color:#7a7a7a;">nu…</div>
<svg class="r" style="left:1798px;top:1345px;" width="20" height="39" viewBox="0 0 20 39"><ellipse cx="9.5" cy="19.75" rx="7.6" ry="8.2" stroke="#7a7a7a" stroke-width="2.1" fill="none"/><path d="M13.3 7.6 L5.5 32.2" stroke="#7a7a7a" stroke-width="2.1" stroke-linecap="round"/></svg>
<div class="t" style="left:1838px;top:1346px;color:#7a7a7a;">null</div>
<svg class="r" style="left:1998px;top:1345px;" width="20" height="39" viewBox="0 0 20 39"><ellipse cx="9.5" cy="19.75" rx="7.6" ry="8.2" stroke="#7a7a7a" stroke-width="2.1" fill="none"/><path d="M13.3 7.6 L5.5 32.2" stroke="#7a7a7a" stroke-width="2.1" stroke-linecap="round"/></svg>
<div class="t" style="left:2038px;top:1346px;color:#7a7a7a;">null</div>
<div class="t" style="left:658px;top:1385px;color:#dddddd;">has_side_effects</div>
<div class="t" style="left:1018px;top:1385px;color:#dddddd;">BOOLEAN</div>
<div class="t" style="left:1478px;top:1385px;color:#dddddd;">YES</div>
<svg class="r" style="left:1638px;top:1384px;" width="20" height="39" viewBox="0 0 20 39"><ellipse cx="9.5" cy="19.75" rx="7.6" ry="8.2" stroke="#7a7a7a" stroke-width="2.1" fill="none"/><path d="M13.3 7.6 L5.5 32.2" stroke="#7a7a7a" stroke-width="2.1" stroke-linecap="round"/></svg>
<div class="t" style="left:1678px;top:1385px;color:#7a7a7a;">nu…</div>
<svg class="r" style="left:1798px;top:1384px;" width="20" height="39" viewBox="0 0 20 39"><ellipse cx="9.5" cy="19.75" rx="7.6" ry="8.2" stroke="#7a7a7a" stroke-width="2.1" fill="none"/><path d="M13.3 7.6 L5.5 32.2" stroke="#7a7a7a" stroke-width="2.1" stroke-linecap="round"/></svg>
<div class="t" style="left:1838px;top:1385px;color:#7a7a7a;">null</div>
<svg class="r" style="left:1998px;top:1384px;" width="20" height="39" viewBox="0 0 20 39"><ellipse cx="9.5" cy="19.75" rx="7.6" ry="8.2" stroke="#7a7a7a" stroke-width="2.1" fill="none"/><path d="M13.3 7.6 L5.5 32.2" stroke="#7a7a7a" stroke-width="2.1" stroke-linecap="round"/></svg>
<div class="t" style="left:2038px;top:1385px;color:#7a7a7a;">null</div>
<div class="t" style="left:658px;top:1424px;color:#dddddd;">internal</div>
<div class="t" style="left:1018px;top:1424px;color:#dddddd;">BOOLEAN</div>
<div class="t" style="left:1478px;top:1424px;color:#dddddd;">YES</div>
<svg class="r" style="left:1638px;top:1423px;" width="20" height="39" viewBox="0 0 20 39"><ellipse cx="9.5" cy="19.75" rx="7.6" ry="8.2" stroke="#7a7a7a" stroke-width="2.1" fill="none"/><path d="M13.3 7.6 L5.5 32.2" stroke="#7a7a7a" stroke-width="2.1" stroke-linecap="round"/></svg>
<div class="t" style="left:1678px;top:1424px;color:#7a7a7a;">nu…</div>
<svg class="r" style="left:1798px;top:1423px;" width="20" height="39" viewBox="0 0 20 39"><ellipse cx="9.5" cy="19.75" rx="7.6" ry="8.2" stroke="#7a7a7a" stroke-width="2.1" fill="none"/><path d="M13.3 7.6 L5.5 32.2" stroke="#7a7a7a" stroke-width="2.1" stroke-linecap="round"/></svg>
<div class="t" style="left:1838px;top:1424px;color:#7a7a7a;">null</div>
<svg class="r" style="left:1998px;top:1423px;" width="20" height="39" viewBox="0 0 20 39"><ellipse cx="9.5" cy="19.75" rx="7.6" ry="8.2" stroke="#7a7a7a" stroke-width="2.1" fill="none"/><path d="M13.3 7.6 L5.5 32.2" stroke="#7a7a7a" stroke-width="2.1" stroke-linecap="round"/></svg>
<div class="t" style="left:2038px;top:1424px;color:#7a7a7a;">null</div>
<div class="r" style="left:2358px;top:838px;width:40px;height:624px;background:#1e1e1e;"></div>
<div class="r" style="left:2358px;top:838px;width:40px;height:527px;background:#555555;"></div>
<svg class="r" style="left:38px;top:1501px;" width="20" height="20" viewBox="0 0 20 20"><path d="M1 12 L8.3 1.3 L10.7 1.3 L18 12 L13 12 L9.5 6.2 L6 12 Z" fill="#45ffca"/></svg>
<div class="t" style="left:58px;top:1502px;color:#45ffca;font-weight:bold;">q</div>
<div class="t" style="left:98px;top:1502px;color:#feffac;">Quit</div>
<div class="t" style="left:218px;top:1502px;color:#45ffca;font-weight:bold;">f1</div>
<div class="t" style="left:278px;top:1502px;color:#feffac;">Help</div>
<div class="t" style="left:398px;top:1502px;color:#45ffca;font-weight:bold;">f8</div>
<div class="t" style="left:458px;top:1502px;color:#feffac;">History</div>
<svg class="r" style="left:638px;top:1501px;" width="20" height="20" viewBox="0 0 20 20"><path d="M1 12 L8.3 1.3 L10.7 1.3 L18 12 L13 12 L9.5 6.2 L6 12 Z" fill="#45ffca"/></svg>
<svg class="r" style="left:658px;top:1501px;" width="24" height="39" viewBox="0 0 24 39"><path d="M14.4 4.2 H20.7 V22.2 H8.7 V27.9 L-0.3 18.4 L8.7 9.2 V14.5 H14.4 Z" stroke="#45ffca" stroke-width="1.8" fill="none" stroke-linejoin="miter"/></svg>
<div class="t" style="left:698px;top:1502px;color:#45ffca;font-weight:bold;">or</div>
<svg class="r" style="left:758px;top:1501px;" width="20" height="20" viewBox="0 0 20 20"><path d="M1 12 L8.3 1.3 L10.7 1.3 L18 12 L13 12 L9.5 6.2 L6 12 Z" fill="#45ffca"/></svg>
<div class="t" style="left:778px;top:1502px;color:#45ffca;font-weight:bold;">j</div>
<div class="t" style="left:818px;top:1502px;color:#feffac;">Run Query</div>
<div class="t" style="left:1038px;top:1502px;color:#45ffca;font-weight:bold;">f4</div>
<div class="t" style="left:1098px;top:1502px;color:#feffac;">Format Query</div>
<svg class="r" style="left:1378px;top:1501px;" width="20" height="20" viewBox="0 0 20 20"><path d="M1 12 L8.3 1.3 L10.7 1.3 L18 12 L13 12 L9.5 6.2 L6 12 Z" fill="#45ffca"/></svg>
<div class="t" style="left:1398px;top:1502px;color:#45ffca;font-weight:bold;">s</div>
<div class="t" style="left:1438px;top:1502px;color:#feffac;">Save Query</div>
<svg class="r" style="left:1678px;top:1501px;" width="20" height="20" viewBox="0 0 20 20"><path d="M1 12 L8.3 1.3 L10.7 1.3 L18 12 L13 12 L9.5 6.2 L6 12 Z" fill="#45ffca"/></svg>
<div class="t" style="left:1698px;top:1502px;color:#45ffca;font-weight:bold;">o</div>
<div class="t" style="left:1738px;top:1502px;color:#feffac;">Open Query</div>
<svg class="r" style="left:1978px;top:1501px;" width="20" height="20" viewBox="0 0 20 20"><path d="M1 12 L8.3 1.3 L10.7 1.3 L18 12 L13 12 L9.5 6.2 L6 12 Z" fill="#45ffca"/></svg>
<div class="t" style="left:1998px;top:1502px;color:#45ffca;font-weight:bold;">f</div>
<div class="t" style="left:2038px;top:1502px;color:#feffac;">Find</div>
<div class="t" style="left:2158px;top:1502px;color:#45ffca;font-weight:bold;">f3</div>
<div class="t" style="left:2218px;top:1502px;color:#feffac;">Find Next</div>
</body></html>
